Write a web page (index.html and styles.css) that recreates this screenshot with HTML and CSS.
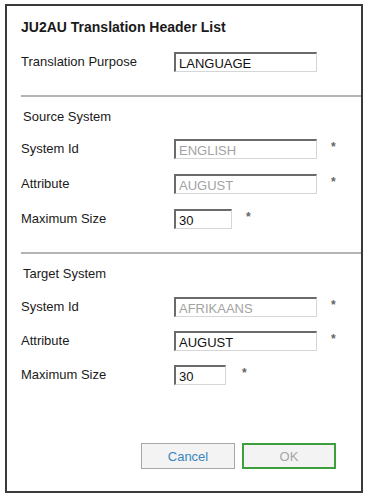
FILE: index.html
```html
<!DOCTYPE html>
<html>
<head>
    <title>JU2AU Translation Header List</title>
    <link rel="stylesheet" href="styles.css">
</head>
<body>
    <!-- Dialog window -->
    <div class="dialog">
        <h1 class="dialog-title">JU2AU Translation Header List</h1>

        <!-- Purpose -->
        <div class="form-row first-row">
            <label class="field-label">Translation Purpose</label>
            <input class="field-input wide" type="text" value="LANGUAGE">
        </div>

        <hr class="divider">

        <!-- Source system block -->
        <div class="section-title">Source System</div>
        <div class="rows source-rows">
            <div class="form-row">
                <label class="field-label">System Id</label>
                <input class="field-input wide disabled" type="text" value="ENGLISH" readonly>
                <span class="required">*</span>
            </div>
            <div class="form-row">
                <label class="field-label">Attribute</label>
                <input class="field-input wide disabled" type="text" value="AUGUST" readonly>
                <span class="required">*</span>
            </div>
            <div class="form-row">
                <label class="field-label">Maximum Size</label>
                <input class="field-input size-src" type="text" value="30">
                <span class="required">*</span>
            </div>
        </div>

        <hr class="divider">

        <!-- Target system block -->
        <div class="section-title">Target System</div>
        <div class="rows target-rows">
            <div class="form-row">
                <label class="field-label">System Id</label>
                <input class="field-input wide disabled" type="text" value="AFRIKAANS" readonly>
                <span class="required">*</span>
            </div>
            <div class="form-row">
                <label class="field-label">Attribute</label>
                <input class="field-input wide" type="text" value="AUGUST">
                <span class="required">*</span>
            </div>
            <div class="form-row">
                <label class="field-label">Maximum Size</label>
                <input class="field-input size-tgt" type="text" value="30">
                <span class="required">*</span>
            </div>
        </div>

        <!-- Buttons -->
        <div class="buttons">
            <button class="btn btn-cancel">Cancel</button>
            <button class="btn btn-ok">OK</button>
        </div>
    </div>
</body>
</html>
```

FILE: styles.css
```css
/* Page */
body {
    margin: 0;
    background: #ffffff;
    font-family: "Liberation Sans", Arial, sans-serif;
    color: #1a1a1a;
}

/* Dialog frame */
.dialog {
    box-sizing: border-box;
    width: 358px;
    height: 489px;
    margin: 4px 0 0 5px;
    border: 2px solid #3a3a3a;
    padding-left: 14px;
    display: flex;
    flex-direction: column;
}

.dialog-title {
    margin: 13px 0 0 0;
    font-size: 14px;
    line-height: 16px;
    font-weight: bold;
    color: #1a1a1a;
}

/* Form rows */
.form-row {
    display: flex;
    align-items: center;
    height: 20px;
}

.first-row {
    margin-top: 17px;
}

.field-label {
    width: 153px;
    font-size: 13px;
    line-height: 16px;
    margin-top: -1px;
}

.field-input {
    box-sizing: border-box;
    height: 20px;
    margin: 0;
    padding: 1px 0 0 3px;
    font-family: "Liberation Sans", Arial, sans-serif;
    font-size: 13px;
    color: #111;
    background: #ffffff;
    border: 1px solid #d6d6d6;
    border-top: 2px solid #6a6a6a;
    border-left: 2px solid #6a6a6a;
    outline: none;
}

.wide {
    width: 143px;
}

.size-src {
    width: 58px;
}

.size-tgt {
    width: 52px;
}

.disabled {
    color: #a3a3a3;
}

.required {
    margin-left: 14px;
    font-size: 12px;
    font-weight: bold;
    color: #666;
    align-self: flex-start;
    margin-top: 1px;
}

.size-tgt + .required {
    margin-left: 16px;
}

/* Section separators */
.divider {
    margin: 23px 0 0 0;
    border: none;
    border-top: 2px solid #b4b4b4;
    height: 0;
}

.section-title {
    margin: 12px 0 0 2px;
    font-size: 13px;
    line-height: 16px;
}

.rows {
    display: flex;
    flex-direction: column;
}

.source-rows {
    margin-top: 14px;
    gap: 15px;
}

.target-rows {
    margin-top: 15px;
    gap: 14px;
}

/* Buttons */
.buttons {
    margin-top: auto;
    margin-bottom: 22px;
    padding-right: 25px;
    display: flex;
    justify-content: flex-end;
    gap: 7px;
}

.btn {
    box-sizing: border-box;
    width: 94px;
    height: 26px;
    font-family: "Liberation Sans", Arial, sans-serif;
    font-size: 13px;
    background: #f3f3f3;
    padding: 0;
}

.btn-cancel {
    border: 1px solid #a8a8a8;
    color: #3a86bf;
}

.btn-ok {
    border: 2px solid #3f9f3f;
    color: #a6a6a6;
}
```
